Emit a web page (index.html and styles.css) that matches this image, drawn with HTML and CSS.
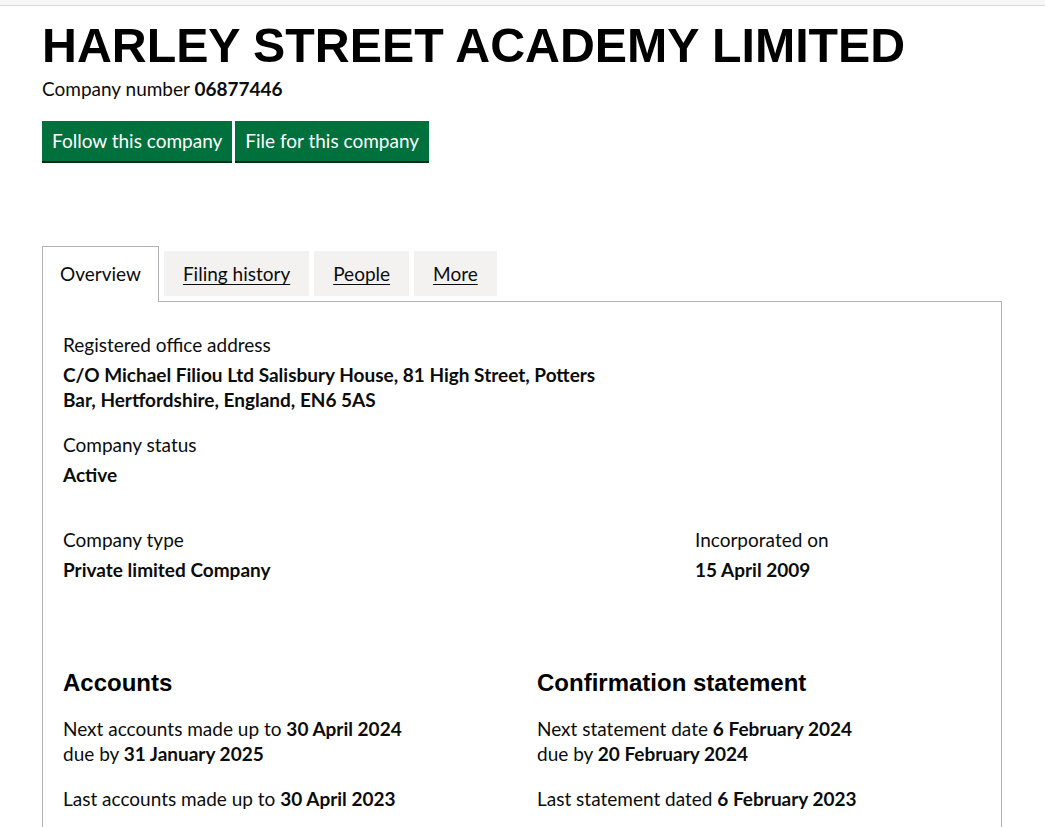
FILE: index.html
```html
<!DOCTYPE html>
<html lang="en">
<head>
<meta charset="utf-8">
<title>HARLEY STREET ACADEMY LIMITED</title>
<link rel="stylesheet" href="styles.css">
</head>
<body>
<div class="topbar"></div>
<main class="page">
  <h1 class="company-name">HARLEY STREET ACADEMY LIMITED</h1>
  <p class="company-number">Company number <strong>06877446</strong></p>
  <div class="actions">
    <a class="button" href="#">Follow this company</a>
    <a class="button" href="#">File for this company</a>
  </div>

  <div class="tabs">
    <ul class="tab-list">
      <li class="tab tab-active"><span>Overview</span></li>
      <li class="tab"><a href="#">Filing history</a></li>
      <li class="tab"><a href="#">People</a></li>
      <li class="tab"><a href="#">More</a></li>
    </ul>
    <div class="panel">
      <dl class="field">
        <dt>Registered office address</dt>
        <dd>C/O Michael Filiou Ltd Salisbury House, 81 High Street, Potters<br>Bar, Hertfordshire, England, EN6 5AS</dd>
      </dl>
      <dl class="field field-last">
        <dt>Company status</dt>
        <dd>Active</dd>
      </dl>
      <div class="row row-type">
        <dl class="field col-two-thirds">
          <dt>Company type</dt>
          <dd>Private limited Company</dd>
        </dl>
        <dl class="field col-one-third">
          <dt>Incorporated on</dt>
          <dd>15 April 2009</dd>
        </dl>
      </div>
      <div class="row row-dates">
        <div class="col-half">
          <h2 class="section-title">Accounts</h2>
          <p class="body">Next accounts made up to <strong>30 April 2024</strong><br>due by <strong>31 January 2025</strong></p>
          <p class="body">Last accounts made up to <strong>30 April 2023</strong></p>
        </div>
        <div class="col-half">
          <h2 class="section-title">Confirmation statement</h2>
          <p class="body">Next statement date <strong>6 February 2024</strong><br>due by <strong>20 February 2024</strong></p>
          <p class="body">Last statement dated <strong>6 February 2023</strong></p>
        </div>
      </div>
    </div>
  </div>
</main>
</body>
</html>
```
FILE: styles.css
```css
html, body {
  margin: 0;
  padding: 0;
  background: #ffffff;
}
body {
  font-family: "Lato", "Noto Sans", sans-serif;
  font-size: 19px;
  line-height: 25px;
  color: #0b0c0c;
}
.topbar {
  height: 5px;
  background: #f6f6f7;
  border-bottom: 1px solid #d9d9dc;
}
.page {
  width: 960px;
  margin-left: 42px;
}
.company-name {
  font-family: "Liberation Sans", Arial, sans-serif;
  font-weight: 700;
  font-size: 48.3px;
  line-height: 55px;
  margin: 12px 0 0;
  color: #000;
}
.company-number {
  margin: 3px 0 0;
  font-size: 19px;
  line-height: 25px;
}
.company-number strong { font-weight: 700; }
.actions {
  display: flex;
  gap: 3px;
  margin-top: 20px;
}
.button {
  display: block;
  height: 40px;
  line-height: 40px;
  padding: 0 10px;
  background: #00703c;
  color: #fff;
  text-decoration: none;
  box-shadow: 0 2px 0 #002d18;
  font-size: 19px;
}
.tabs {
  margin-top: 85px;
}
.tab-list {
  display: flex;
  align-items: flex-start;
  list-style: none;
  margin: 0;
  padding: 0;
}
.tab {
  margin: 5px 5px 5px 0;
  padding: 10px 19px;
  background: #f3f2f1;
}
.tab a {
  color: #0b0c0c;
  text-decoration: underline;
  text-decoration-thickness: 1px;
  text-underline-offset: 3px;
}
.tab-active {
  margin: 0 5px -1px 0;
  padding: 14px 17px 16px;
  background: #fff;
  border: 1px solid #b1b4b6;
  border-bottom: 0;
  position: relative;
  z-index: 1;
}
.panel {
  border: 1px solid #b1b4b6;
  padding: 30px 20px 20px;
}
.field {
  margin: 0 0 20px;
}
.field dt {
  margin: 0 0 5px;
}
.field dd {
  margin: 0;
  font-weight: 700;
}
.field-last {
  margin-bottom: 40px;
}
.row {
  display: flex;
  margin: 0 -15px;
}
.col-two-thirds {
  width: 66.6667%;
  padding: 0 15px;
  box-sizing: border-box;
}
.col-one-third {
  width: 33.3333%;
  padding: 0 15px;
  box-sizing: border-box;
}
.col-half {
  width: 50%;
  padding: 0 15px;
  box-sizing: border-box;
}
.row-type .field { margin-bottom: 0; }
.row-dates {
  margin-top: 86px;
}
.section-title {
  font-family: "Liberation Sans", Arial, sans-serif;
  font-weight: 700;
  font-size: 24px;
  line-height: 30px;
  margin: 0 0 18px;
  color: #000;
}
.body {
  margin: 0 0 20px;
}
.body strong { font-weight: 700; }
```
